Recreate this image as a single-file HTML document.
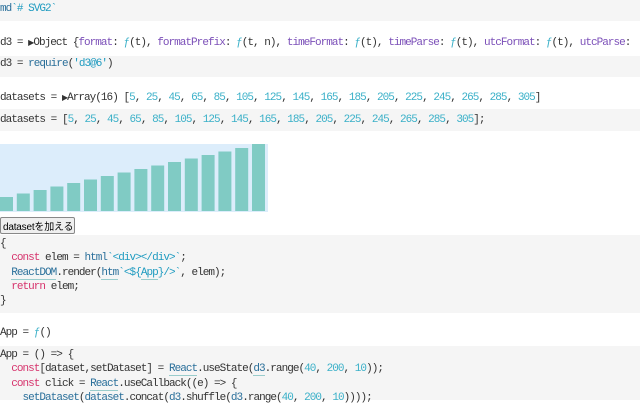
<!DOCTYPE html>
<html><head><meta charset="utf-8"><style>
body{margin:0;width:640px;height:400px;overflow:hidden;background:#fff;font-family:"Liberation Mono",monospace;font-size:11px;letter-spacing:-0.97px;color:#333}
.g{background:#f5f5f5}
.l{position:absolute;left:0;white-space:pre;line-height:14.3px}
.blk{position:absolute;left:0;width:640px}
.k{color:#d6336c}.s{color:#1f9bc0}.n{color:#3ab0c8}.p{color:#7b4fb8}.v{color:#2a6f9a}
.u{border-bottom:1px solid #9cc;}
button{position:absolute;left:0;top:217px;height:17px;width:75px;font:10px "Liberation Sans","Noto Sans CJK JP",sans-serif;letter-spacing:-0.2px;background:#efefef;border:1px solid #888;border-radius:2px;padding:0 2px;color:#000;white-space:nowrap}
</style></head><body>
<div class="blk g" style="top:0;height:21px"></div>
<div class="blk g" style="top:56px;height:21px"></div>
<div class="blk g" style="top:109px;height:22px"></div>
<div class="blk g" style="top:235px;height:78px"></div>
<div class="blk g" style="top:346px;height:54px"></div>
<div class="l" style="top:2px"><span class="v">md</span><span class="s">`# SVG2`</span></div>
<div class="l" style="top:36px">d3 = <span style="font-size:8px">▶</span>Object {<span class="p">format</span>: <span class="n">ƒ</span>(t), <span class="p">formatPrefix</span>: <span class="n">ƒ</span>(t, n), <span class="p">timeFormat</span>: <span class="n">ƒ</span>(t), <span class="p">timeParse</span>: <span class="n">ƒ</span>(t), <span class="p">utcFormat</span>: <span class="n">ƒ</span>(t), <span class="p">utcParse</span>:</div>
<div class="l" style="top:57px">d3 = <span class="v">require</span>(<span class="s">'d3@6'</span>)</div>
<div class="l" style="top:91px">datasets = <span style="font-size:8px">▶</span>Array(16) [<span class="n">5</span>, <span class="n">25</span>, <span class="n">45</span>, <span class="n">65</span>, <span class="n">85</span>, <span class="n">105</span>, <span class="n">125</span>, <span class="n">145</span>, <span class="n">165</span>, <span class="n">185</span>, <span class="n">205</span>, <span class="n">225</span>, <span class="n">245</span>, <span class="n">265</span>, <span class="n">285</span>, <span class="n">305</span>]</div>
<div class="l" style="top:113px">datasets = [<span class="n">5</span>, <span class="n">25</span>, <span class="n">45</span>, <span class="n">65</span>, <span class="n">85</span>, <span class="n">105</span>, <span class="n">125</span>, <span class="n">145</span>, <span class="n">165</span>, <span class="n">185</span>, <span class="n">205</span>, <span class="n">225</span>, <span class="n">245</span>, <span class="n">265</span>, <span class="n">285</span>, <span class="n">305</span>];</div>
<svg style="position:absolute;left:0;top:144px" width="268" height="68">
<rect width="268" height="68" fill="#dcedfb"/>
<g fill="#80cbc4">
<rect x="0" y="53" width="13" height="14"/><rect x="16.8" y="49.5" width="13" height="17.5"/><rect x="33.6" y="46" width="13" height="21"/><rect x="50.4" y="42.5" width="13" height="24.5"/><rect x="67.2" y="39" width="13" height="28"/><rect x="84" y="35.5" width="13" height="31.5"/><rect x="100.8" y="32" width="13" height="35"/><rect x="117.6" y="28.5" width="13" height="38.5"/><rect x="134.4" y="25" width="13" height="42"/><rect x="151.2" y="21.5" width="13" height="45.5"/><rect x="168" y="18" width="13" height="49"/><rect x="184.8" y="14.5" width="13" height="52.5"/><rect x="201.6" y="11" width="13" height="56"/><rect x="218.4" y="7.5" width="13" height="59.5"/><rect x="235.2" y="4" width="13" height="63"/><rect x="252" y="0" width="13" height="67"/>
</g></svg>
<button>datasetを加える</button>
<div class="l" style="top:237px">{
  <span class="k">const</span> elem = <span class="v">html</span><span class="s">`&lt;div&gt;&lt;/div&gt;`</span>;
  <span class="v u">ReactDOM</span>.render(<span class="v u">htm</span><span class="s">`&lt;${<span class="u">App</span>}/&gt;`</span>, elem);
  <span class="k">return</span> elem;
}</div>
<div class="l" style="top:326px">App = <span class="n">ƒ</span>()</div>
<div class="l" style="top:348px">App = () =&gt; {
  <span class="k">const</span>[dataset,setDataset] = <span class="v u">React</span>.useState(<span class="v u">d3</span>.range(<span class="n">40</span>, <span class="n">200</span>, <span class="n">10</span>));
  <span class="k">const</span> click = <span class="v u">React</span>.useCallback((e) =&gt; {
    <span class="v">setDataset</span>(<span class="v">dataset</span>.concat(<span class="v">d3</span>.shuffle(<span class="v">d3</span>.range(<span class="n">40</span>, <span class="n">200</span>, <span class="n">10</span>))));</div>
</body></html>
